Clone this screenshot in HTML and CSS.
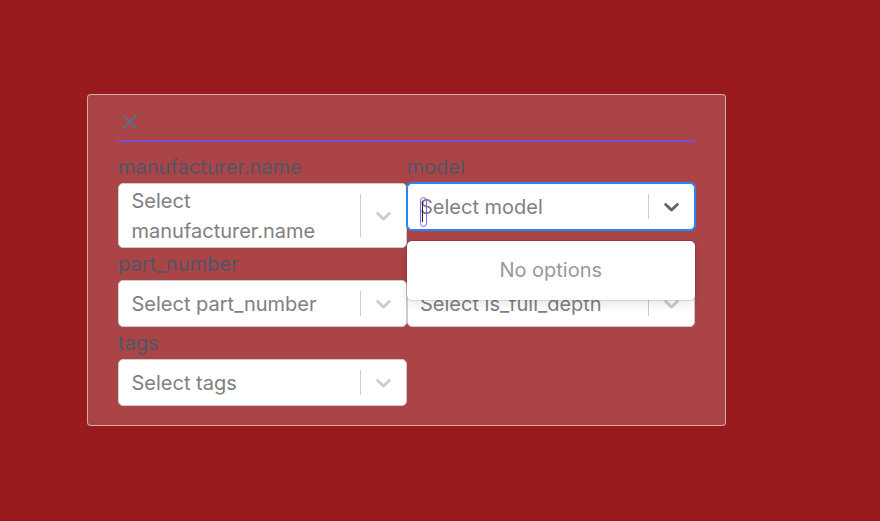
FILE: index.html
```html
<!DOCTYPE html>
<html lang="en">
<head>
    <meta charset="UTF-8">
    <meta name="viewport" content="width=device-width, initial-scale=1.0">
    <title>Filters</title>
    <link rel="stylesheet" href="styles.css">
</head>
<body>
    <div class="filter-panel">
        <div class="panel-header">
            <button class="close-btn" aria-label="Close">
                <svg width="24" height="24" viewBox="0 0 24 24" fill="none" stroke="currentColor" stroke-width="2"><path d="M5 5L19 19M19 5L5 19"/></svg>
            </button>
        </div>

        <div class="fields">
            <div class="field">
                <label>manufacturer.name</label>
                <div class="select">
                    <div class="value"><span class="placeholder">Select manufacturer.name</span></div>
                    <div class="indicators">
                        <span class="separator"></span>
                        <span class="chevron"><svg width="25" height="25" viewBox="0 0 20 20"><path d="M4.516 7.548c0.436-0.446 1.043-0.481 1.576 0l3.908 3.747 3.908-3.747c0.533-0.481 1.141-0.446 1.574 0 0.436 0.445 0.408 1.197 0 1.615-0.406 0.418-4.695 4.502-4.695 4.502-0.217 0.223-0.502 0.335-0.787 0.335s-0.57-0.112-0.789-0.335c0 0-4.287-4.084-4.695-4.502s-0.436-1.170 0-1.615z"/></svg></span>
                    </div>
                </div>
            </div>

            <div class="field field-open">
                <label>model</label>
                <div class="select focused">
                    <div class="value">
                        <span class="placeholder">Select model</span>
                        <span class="caret"></span>
                    </div>
                    <div class="indicators">
                        <span class="separator"></span>
                        <span class="chevron"><svg width="25" height="25" viewBox="0 0 20 20"><path d="M4.516 7.548c0.436-0.446 1.043-0.481 1.576 0l3.908 3.747 3.908-3.747c0.533-0.481 1.141-0.446 1.574 0 0.436 0.445 0.408 1.197 0 1.615-0.406 0.418-4.695 4.502-4.695 4.502-0.217 0.223-0.502 0.335-0.787 0.335s-0.57-0.112-0.789-0.335c0 0-4.287-4.084-4.695-4.502s-0.436-1.170 0-1.615z"/></svg></span>
                    </div>
                </div>
                <div class="menu">
                    <div class="notice">No options</div>
                </div>
            </div>

            <div class="field">
                <label>part_number</label>
                <div class="select">
                    <div class="value"><span class="placeholder">Select part_number</span></div>
                    <div class="indicators">
                        <span class="separator"></span>
                        <span class="chevron"><svg width="25" height="25" viewBox="0 0 20 20"><path d="M4.516 7.548c0.436-0.446 1.043-0.481 1.576 0l3.908 3.747 3.908-3.747c0.533-0.481 1.141-0.446 1.574 0 0.436 0.445 0.408 1.197 0 1.615-0.406 0.418-4.695 4.502-4.695 4.502-0.217 0.223-0.502 0.335-0.787 0.335s-0.57-0.112-0.789-0.335c0 0-4.287-4.084-4.695-4.502s-0.436-1.170 0-1.615z"/></svg></span>
                    </div>
                </div>
            </div>

            <div class="field">
                <label>is_full_depth</label>
                <div class="select">
                    <div class="value"><span class="placeholder">Select is_full_depth</span></div>
                    <div class="indicators">
                        <span class="separator"></span>
                        <span class="chevron"><svg width="25" height="25" viewBox="0 0 20 20"><path d="M4.516 7.548c0.436-0.446 1.043-0.481 1.576 0l3.908 3.747 3.908-3.747c0.533-0.481 1.141-0.446 1.574 0 0.436 0.445 0.408 1.197 0 1.615-0.406 0.418-4.695 4.502-4.695 4.502-0.217 0.223-0.502 0.335-0.787 0.335s-0.57-0.112-0.789-0.335c0 0-4.287-4.084-4.695-4.502s-0.436-1.170 0-1.615z"/></svg></span>
                    </div>
                </div>
            </div>

            <div class="field">
                <label>tags</label>
                <div class="select">
                    <div class="value"><span class="placeholder">Select tags</span></div>
                    <div class="indicators">
                        <span class="separator"></span>
                        <span class="chevron"><svg width="25" height="25" viewBox="0 0 20 20"><path d="M4.516 7.548c0.436-0.446 1.043-0.481 1.576 0l3.908 3.747 3.908-3.747c0.533-0.481 1.141-0.446 1.574 0 0.436 0.445 0.408 1.197 0 1.615-0.406 0.418-4.695 4.502-4.695 4.502-0.217 0.223-0.502 0.335-0.787 0.335s-0.57-0.112-0.789-0.335c0 0-4.287-4.084-4.695-4.502s-0.436-1.170 0-1.615z"/></svg></span>
                    </div>
                </div>
            </div>
        </div>
    </div>
</body>
</html>
```

FILE: styles.css
```css
* {
    box-sizing: border-box;
}
body {
    margin: 0;
    padding: 94px 0 0 87px;
    background-color: #991b1e;
    font-family: Inter, "Noto Sans", sans-serif;
    font-size: 20px;
    line-height: 1.5;
}
.filter-panel {
    width: 639px;
    padding: 15px 30px 19px 30px;
    background-color: rgba(255, 255, 255, 0.18);
    border: 1px solid rgba(255, 255, 255, 0.55);
    border-radius: 4px;
}
.panel-header {
    padding-bottom: 6px;
    border-bottom: 2px solid #7a4fd0;
    margin-bottom: 9px;
}
.close-btn {
    display: block;
    padding: 0;
    border: none;
    background: none;
    color: #5f6d82;
    cursor: pointer;
}
.close-btn svg {
    display: block;
}
.fields {
    display: grid;
    grid-template-columns: 1fr 1fr;
}
.field {
    position: relative;
}
.field label {
    display: block;
    line-height: 32px;
    color: #4f5766;
}
.select {
    display: flex;
    align-items: center;
    min-height: 46px;
    background-color: #fff;
    border: 1px solid #ccc;
    border-radius: 5px;
}
.select.focused {
    border-color: #2684ff;
    box-shadow: 0 0 0 1px #2684ff;
}
.value {
    position: relative;
    flex: 1;
    padding: 1.5px 10px;
}
.placeholder {
    display: block;
    margin: 0 2.5px;
    color: #808080;
}
.caret {
    position: absolute;
    left: 12px;
    top: 7px;
    width: 7px;
    height: 30px;
    border: 1.5px solid #8b5cf6;
    border-radius: 4px;
}
.caret::after {
    content: "";
    position: absolute;
    left: 1px;
    top: 3px;
    width: 1.5px;
    height: 21px;
    background-color: #222;
}
.indicators {
    display: flex;
    align-items: stretch;
    align-self: stretch;
}
.separator {
    width: 1px;
    margin: 10px 0;
    background-color: #ccc;
}
.chevron {
    display: flex;
    align-items: center;
    padding: 10px;
    fill: #ccc;
}
.focused .chevron {
    fill: #666;
}
.chevron svg {
    display: block;
}
.menu {
    position: absolute;
    top: 90px;
    left: 0;
    right: 0;
    z-index: 2;
    padding: 5px 0;
    background-color: #fff;
    border-radius: 5px;
    box-shadow: 0 0 0 1px rgba(0, 0, 0, 0.1), 0 4px 11px rgba(0, 0, 0, 0.1);
}
.notice {
    padding: 10px 15px;
    text-align: center;
    color: #999;
    line-height: 29px;
}
```
